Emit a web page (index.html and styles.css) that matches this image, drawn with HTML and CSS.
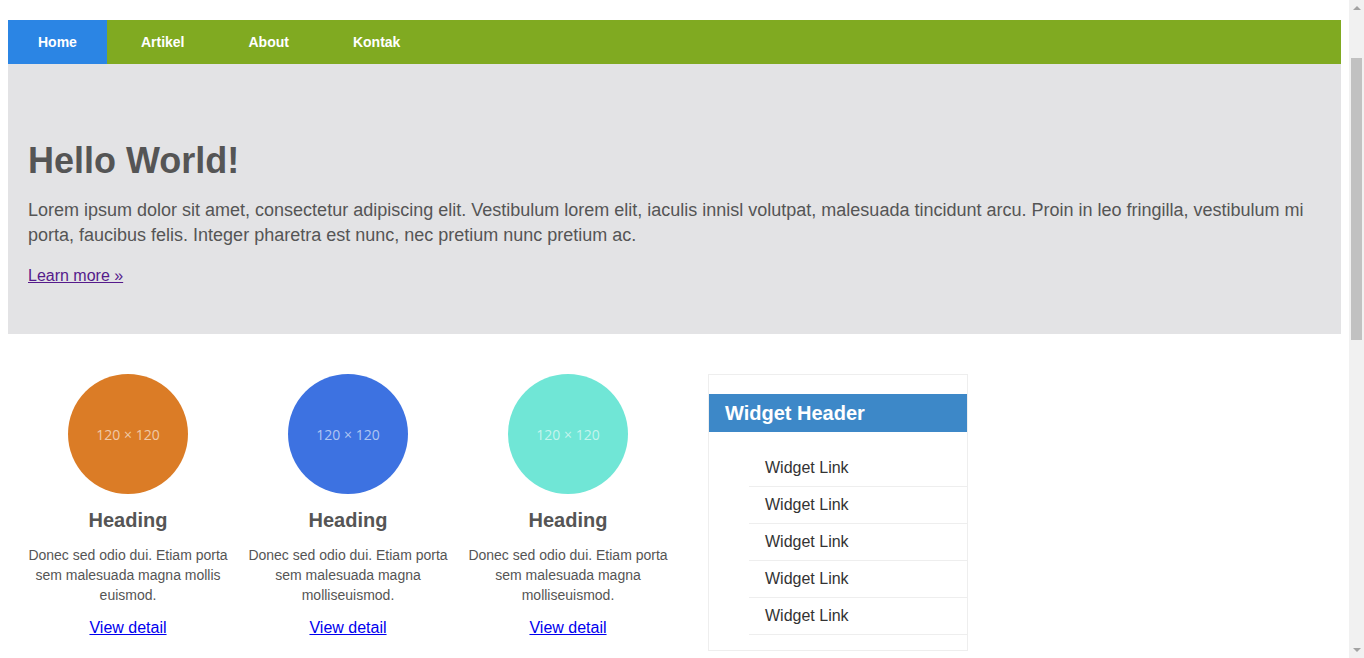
FILE: index.html
```html
<!DOCTYPE html>
<html lang="en">
<head>
    <meta charset="UTF-8">
    <meta name="viewport" content="width=device-width, initial-scale=1.0">
    <title>Hello World</title>
    <link rel="stylesheet" href="styles.css">
</head>
<body>
    <div class="wrapper">
        <nav class="navbar">
            <a href="#" class="active">Home</a>
            <a href="#">Artikel</a>
            <a href="#">About</a>
            <a href="#">Kontak</a>
        </nav>

        <div class="hero">
            <h1>Hello World!</h1>
            <p>Lorem ipsum dolor sit amet, consectetur adipiscing elit. Vestibulum lorem elit, iaculis innisl volutpat, malesuada tincidunt arcu. Proin in leo fringilla, vestibulum mi porta, faucibus felis. Integer pharetra est nunc, nec pretium nunc pretium ac.</p>
            <a href="#" class="learn-more">Learn more &raquo;</a>
        </div>

        <div class="content">
            <div class="columns">
                <div class="column">
                    <div class="thumb orange">120 × 120</div>
                    <h2>Heading</h2>
                    <p>Donec sed odio dui. Etiam porta sem malesuada magna mollis euismod.</p>
                    <a href="#">View detail</a>
                </div>
                <div class="column">
                    <div class="thumb blue">120 × 120</div>
                    <h2>Heading</h2>
                    <p>Donec sed odio dui. Etiam porta sem malesuada magna molliseuismod.</p>
                    <a href="#">View detail</a>
                </div>
                <div class="column">
                    <div class="thumb teal">120 × 120</div>
                    <h2>Heading</h2>
                    <p>Donec sed odio dui. Etiam porta sem malesuada magna molliseuismod.</p>
                    <a href="#">View detail</a>
                </div>
            </div>

            <aside class="widget">
                <h3 class="widget-header">Widget Header</h3>
                <ul class="widget-links">
                    <li><a href="#">Widget Link</a></li>
                    <li><a href="#">Widget Link</a></li>
                    <li><a href="#">Widget Link</a></li>
                    <li><a href="#">Widget Link</a></li>
                    <li><a href="#">Widget Link</a></li>
                </ul>
            </aside>
        </div>
    </div>

    <!-- window scrollbar, as in the capture -->
    <div class="scrollbar">
        <span class="arrow up"></span>
        <span class="thumb-bar"></span>
        <span class="arrow down"></span>
    </div>
</body>
</html>
```

FILE: styles.css
```css
body {
    font-family: 'Liberation Sans', Arial, sans-serif;
    margin: 0 23px 0 8px;
    background: #ffffff;
    color: #555555;
}

.wrapper {
    padding-top: 20px;
}

.navbar {
    display: flex;
    height: 44px;
    background: #80aa21;
}

.navbar a {
    display: flex;
    align-items: center;
    padding: 0 30px;
    margin-right: 4px;
    color: #ffffff;
    font-size: 14px;
    font-weight: bold;
    text-decoration: none;
}

.navbar a.active {
    background: #2b85e4;
}

.hero {
    background: #e3e3e5;
    padding: 76px 20px 48px;
}

.hero h1 {
    margin: 0 0 16px;
    font-size: 36px;
    line-height: 42px;
    color: #555555;
}

.hero p {
    margin: 0 0 18px;
    font-size: 18px;
    line-height: 25px;
}

.learn-more {
    display: inline-block;
    font-size: 16px;
    line-height: 20px;
    color: #551a8b;
}

.content {
    display: flex;
    align-items: flex-start;
    padding: 40px 10px 0;
}

.columns {
    display: flex;
}

.column {
    width: 200px;
    padding: 0 10px;
    text-align: center;
}

.thumb {
    width: 120px;
    height: 120px;
    margin: 0 auto;
    border-radius: 50%;
    display: flex;
    align-items: center;
    justify-content: center;
    font-family: 'Open Sans', sans-serif;
    font-size: 14px;
    color: rgba(255, 255, 255, 0.6);
}

.thumb.orange { background: #db7c26; }
.thumb.blue { background: #3d72e1; }
.thumb.teal { background: #70e6d6; }

.column h2 {
    margin: 15px 0 13px;
    font-size: 20px;
    line-height: 23px;
    color: #555555;
}

.column p {
    margin: 0 0 13px;
    font-size: 14px;
    line-height: 20px;
}

.column a {
    font-size: 16px;
    line-height: 20px;
    color: #0000ee;
}

.widget {
    width: 258px;
    margin-left: 30px;
    border: 1px solid #eeeeee;
}

.widget-header {
    margin: 19px 0 0;
    height: 38px;
    padding-left: 16px;
    display: flex;
    align-items: center;
    background: #3d88c8;
    color: #ffffff;
    font-size: 20px;
}

.widget-links {
    list-style: none;
    margin: 18px 0 15px;
    padding-left: 40px;
}

.widget-links li {
    border-bottom: 1px solid #eeeeee;
}

.widget-links a {
    display: block;
    padding: 9px 16px;
    line-height: 18px;
    font-size: 16px;
    color: #333333;
    text-decoration: none;
}

.scrollbar {
    position: fixed;
    top: 0;
    right: 0;
    bottom: 0;
    width: 15px;
    background: #f1f1f1;
    display: flex;
    flex-direction: column;
    align-items: center;
}

.arrow {
    width: 0;
    height: 0;
    border-left: 4px solid transparent;
    border-right: 4px solid transparent;
}

.arrow.up {
    margin: 6px 0 0;
    border-bottom: 4px solid #a3a3a3;
}

.arrow.down {
    margin: auto 0 6px;
    border-top: 4px solid #a3a3a3;
}

.thumb-bar {
    width: 11px;
    height: 282px;
    margin-top: 48px;
    background: #c1c1c1;
}
```
